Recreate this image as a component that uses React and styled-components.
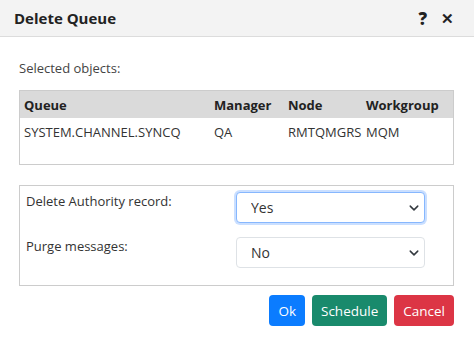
import React, { useState } from "react";
import styled, { createGlobalStyle, css } from "styled-components";

const GlobalStyle = createGlobalStyle`
  html, body {
    margin: 0;
    padding: 0;
    background: #ffffff;
  }
  body {
    font-family: "Open Sans", "Noto Sans", sans-serif;
    font-size: 13px;
    color: #333333;
  }
`;

const Dialog = styled.div`
  width: 474px;
  height: 352px;
  display: flex;
  flex-direction: column;
  box-sizing: border-box;
`;

const Header = styled.div`
  height: 37px;
  box-sizing: border-box;
  display: flex;
  align-items: center;
  justify-content: space-between;
  padding: 0 20px 0 14px;
  background: #f3f3f3;
  border-bottom: 1px solid #dcdcdc;
`;

const Title = styled.div`
  font-weight: 700;
  font-size: 15px;
  color: #222222;
`;

const HeaderTools = styled.div`
  display: flex;
  align-items: center;
  gap: 14px;
`;

const ToolButton = styled.span`
  font-weight: 800;
  font-size: ${(props) => (props.small ? "15px" : "17px")};
  color: #222222;
  line-height: 1;
  cursor: pointer;
`;

const Body = styled.div`
  padding: 22px 20px 0 19px;
  display: flex;
  flex-direction: column;
`;

const Caption = styled.div`
  color: #444444;
  margin-bottom: 13px;
`;

const Table = styled.div`
  border: 1px solid #cccccc;
  height: 75px;
  box-sizing: border-box;
`;

const Row = styled.div`
  display: grid;
  grid-template-columns: 190px 74px 78px 1fr;
  height: 27px;
  align-items: center;
  ${(props) =>
    props.head &&
    css`
      background: #dadada;
      font-weight: 700;
      color: #222222;
    `};
`;

const Cell = styled.div`
  padding-left: 4px;
  white-space: nowrap;
`;

const FormBox = styled.div`
  margin-top: 20px;
  border: 1px solid #cccccc;
  height: 101px;
  box-sizing: border-box;
  padding: 6px 28px 0 6px;
  display: flex;
  flex-direction: column;
  gap: 14px;
`;

const FieldRow = styled.div`
  display: grid;
  grid-template-columns: 210px 1fr;
  align-items: start;
`;

const Label = styled.label`
  color: #333333;
`;

const SelectWrap = styled.div`
  position: relative;
  height: 31px;
`;

const Select = styled.select`
  appearance: none;
  width: 100%;
  height: 31px;
  box-sizing: border-box;
  padding: 0 30px 0 14px;
  font-family: inherit;
  font-size: 14px;
  color: #333333;
  background: #ffffff;
  border: 1px solid #dee2e6;
  border-radius: 4px;
  outline: none;
  ${(props) =>
    props.focused &&
    css`
      border-color: #86b7fe;
      box-shadow: 0 0 0 2px rgba(13, 110, 253, 0.22);
    `};
`;

const Chevron = styled.svg`
  position: absolute;
  right: 6px;
  top: 11px;
  pointer-events: none;
`;

const Footer = styled.div`
  display: flex;
  justify-content: flex-end;
  gap: 7px;
  padding: 9px 20px 0 0;
`;

const Button = styled.button`
  height: 31px;
  padding: 0 9px;
  border: none;
  border-radius: 4px;
  font-family: inherit;
  font-size: 13.5px;
  color: #ffffff;
  cursor: pointer;
  background: ${(props) => props.color};
`;

function DropSelect({ value, focused, onChange }) {
  return (
    <SelectWrap>
      <Select focused={focused} value={value} onChange={onChange}>
        <option>Yes</option>
        <option>No</option>
      </Select>
      <Chevron width="10" height="10" viewBox="0 0 16 16">
        <path
          d="M2 5l6 6 6-6"
          fill="none"
          stroke="#343a40"
          strokeWidth="2.4"
          strokeLinecap="round"
          strokeLinejoin="round"
        />
      </Chevron>
    </SelectWrap>
  );
}

export default function App() {
  const [authority, setAuthority] = useState("Yes");
  const [purge, setPurge] = useState("No");
  const rows = [
    { queue: "SYSTEM.CHANNEL.SYNCQ", manager: "QA", node: "RMTQMGRS", group: "MQM" },
  ];

  return (
    <>
      <GlobalStyle />
      <Dialog>
        <Header>
          <Title>Delete Queue</Title>
          <HeaderTools>
            <ToolButton>?</ToolButton>
            <ToolButton small>✕</ToolButton>
          </HeaderTools>
        </Header>
        <Body>
          <Caption>Selected objects:</Caption>
          <Table>
            <Row head>
              <Cell>Queue</Cell>
              <Cell>Manager</Cell>
              <Cell>Node</Cell>
              <Cell>Workgroup</Cell>
            </Row>
            {rows.map((r, i) => (
              <Row key={i}>
                <Cell>{r.queue}</Cell>
                <Cell>{r.manager}</Cell>
                <Cell>{r.node}</Cell>
                <Cell>{r.group}</Cell>
              </Row>
            ))}
          </Table>
          <FormBox>
            <FieldRow>
              <Label>Delete Authority record:</Label>
              <DropSelect
                focused
                value={authority}
                onChange={(e) => setAuthority(e.target.value)}
              />
            </FieldRow>
            <FieldRow>
              <Label>Purge messages:</Label>
              <DropSelect value={purge} onChange={(e) => setPurge(e.target.value)} />
            </FieldRow>
          </FormBox>
        </Body>
        <Footer>
          <Button color="#0b7cff">Ok</Button>
          <Button color="#198a6c">Schedule</Button>
          <Button color="#dc3545">Cancel</Button>
        </Footer>
      </Dialog>
    </>
  );
}
